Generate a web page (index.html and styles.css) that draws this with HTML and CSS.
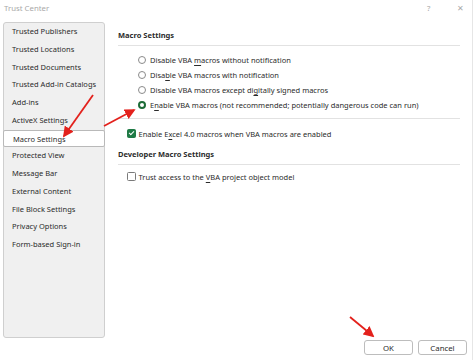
FILE: index.html
```html
<!DOCTYPE html>
<html lang="en">

<head>
    <meta charset="UTF-8">
    <title>Trust Center</title>
    <link rel="stylesheet" href="styles.css">
</head>

<body>

    <div class="window">
        <div class="titlebar">
            <span class="title">Trust Center</span>
            <span class="help">?</span>
            <span class="close">&#x2715;</span>
        </div>

        <div class="main">
            <ul class="sidebar">
                <li>Trusted Publishers</li>
                <li>Trusted Locations</li>
                <li>Trusted Documents</li>
                <li>Trusted Add-in Catalogs</li>
                <li>Add-ins</li>
                <li>ActiveX Settings</li>
                <li class="selected">Macro Settings</li>
                <li>Protected View</li>
                <li>Message Bar</li>
                <li>External Content</li>
                <li>File Block Settings</li>
                <li>Privacy Options</li>
                <li>Form-based Sign-in</li>
            </ul>

            <div class="pane">
                <h3 class="heading">Macro Settings</h3>
                <div class="options">
                    <div class="option"><span class="radio"></span><span>Disable VBA <u>m</u>acros without notification</span></div>
                    <div class="option"><span class="radio"></span><span>Disa<u>b</u>le VBA macros with notification</span></div>
                    <div class="option"><span class="radio"></span><span>Disable VBA macros except di<u>g</u>itally signed macros</span></div>
                    <div class="option"><span class="radio on"></span><span>E<u>n</u>able VBA macros (not recommended; potentially dangerous code can run)</span></div>
                </div>
                <div class="check-row"><span class="check on"></span><span>Enable E<u>x</u>cel 4.0 macros when VBA macros are enabled</span></div>

                <h3 class="heading dev">Developer Macro Settings</h3>
                <div class="check-row trust"><span class="check"></span><span>Trust access to the <u>V</u>BA project object model</span></div>
            </div>
        </div>

        <div class="footer">
            <button>OK</button>
            <button>Cancel</button>
        </div>

        <!-- red annotation arrows drawn over the dialog -->
        <svg class="arrows" width="474" height="360" viewBox="0 0 474 360">
            <defs>
                <marker id="head" markerWidth="6" markerHeight="6" refX="5" refY="3" orient="auto" markerUnits="strokeWidth">
                    <path d="M0,0 L6,3 L0,6 Z" fill="#e3211c"/>
                </marker>
            </defs>
            <line x1="93" y1="95" x2="64" y2="136" stroke="#e3211c" stroke-width="1.8" marker-end="url(#head)"/>
            <line x1="104" y1="126" x2="134" y2="110" stroke="#e3211c" stroke-width="1.8" marker-end="url(#head)"/>
            <line x1="350" y1="317" x2="373" y2="336" stroke="#e3211c" stroke-width="1.8" marker-end="url(#head)"/>
        </svg>
    </div>

</body>

</html>
```

FILE: styles.css
```css
* {
    box-sizing: border-box;
}

body {
    margin: 0;
    background-color: #fff;
    font-family: "Noto Sans", "Open Sans", sans-serif;
    font-size: 7.5px;
    color: #2b2b2b;
}

.window {
    position: relative;
    width: 473px;
    height: 360px;
    border-right: 1px solid #e6e6e6;
}

.titlebar {
    display: flex;
    align-items: center;
    height: 22px;
    padding: 0 0 6px 4px;
    font-size: 7.8px;
    color: #a9a9a9;
}

.title {
    flex: 1;
}

.help {
    width: 30px;
}

.close {
    width: 15px;
}

.main {
    display: flex;
    height: 316px;
}

.sidebar {
    list-style: none;
    margin: 0 0 0 3px;
    padding: 0;
    width: 102px;
    font-size: 7.5px;
    background-color: #f0f0f0;
    border: 1px solid #cfcfcf;
    border-radius: 3px;
}

.sidebar li {
    height: 17.75px;
    line-height: 17.75px;
    padding-left: 8px;
    white-space: nowrap;
}

.sidebar li.selected {
    margin: 0 -1px;
    padding-left: 9px;
    background-color: #fff;
    border: 1px solid #b9b9b9;
    border-radius: 2px;
    line-height: 16px;
}

.pane {
    width: 342px;
    margin-left: 13px;
}

.heading {
    margin: 6px 0 0;
    padding-bottom: 3px;
    line-height: 14px;
    font-size: 7.5px;
    font-weight: bold;
    border-bottom: 1px solid #e2e2e2;
}

.options {
    padding: 6px 0 6px 20px;
    border-bottom: 1px solid #e2e2e2;
}

.option,
.check-row {
    display: flex;
    align-items: center;
    height: 15px;
    white-space: nowrap;
}

.check-row {
    margin-top: 7px;
    padding-left: 9px;
}

.check-row.trust {
    margin-top: 4px;
}

.heading.dev {
    margin-top: 6px;
}

.radio {
    width: 8px;
    height: 8px;
    margin-right: 4px;
    border: 1px solid #8a8a8a;
    border-radius: 50%;
    background-color: #fff;
}

.radio.on {
    border: 2.5px solid #1c6b37;
}

.check {
    width: 8.5px;
    height: 8.5px;
    margin-right: 3px;
    border: 1px solid #7a7a7a;
    border-radius: 1.5px;
    position: relative;
}

.check.on {
    background-color: #1f7a45;
    border-color: #1f7a45;
}

.check.on::after {
    content: "";
    position: absolute;
    left: 1.6px;
    top: 0.2px;
    width: 2.2px;
    height: 4px;
    border: solid #fff;
    border-width: 0 1.2px 1.2px 0;
    transform: rotate(45deg);
}

u {
    text-decoration-thickness: 0.8px;
    text-underline-offset: 1.5px;
}

.footer {
    display: flex;
    justify-content: flex-end;
    gap: 5px;
    padding: 2px 5px 0 0;
}

.footer button {
    width: 49px;
    height: 15px;
    padding: 0;
    font-family: inherit;
    font-size: 7.8px;
    color: #2b2b2b;
    background-color: #fff;
    border: 1px solid #bdbdbd;
    border-radius: 3px;
}

.arrows {
    position: absolute;
    left: 0;
    top: 0;
    pointer-events: none;
}
```
